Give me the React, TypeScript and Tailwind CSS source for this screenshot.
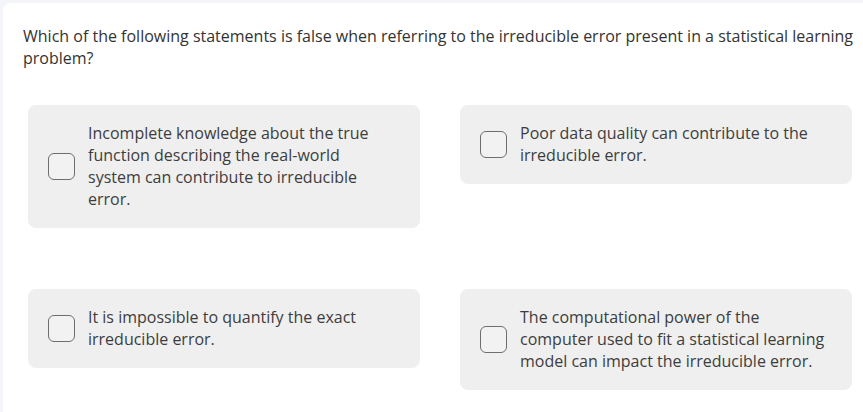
const options = [
  'Incomplete knowledge about the true function describing the real-world system can contribute to irreducible error.',
  'Poor data quality can contribute to the irreducible error.',
  'It is impossible to quantify the exact irreducible error.',
  'The computational power of the computer used to fit a statistical learning model can impact the irreducible error.',
];

function Option({ text }: { text: string }) {
  return (
    <label className="flex items-center gap-[13px] rounded-lg bg-[#efefef] pl-5 pr-6 pt-[17px] pb-[18px] cursor-pointer">
      <span className="shrink-0 w-[27px] h-[27px] rounded-[6px] border-[1.5px] border-[#6e6e6e] bg-[#f2f2f2]" />
      <span className="text-[16px] leading-[22px] text-[#3d3d3d]">{text}</span>
    </label>
  );
}

export default function App() {
  return (
    <div
      className="h-[412px] overflow-hidden bg-[#f4f5f8] pl-[3px] pt-[3px]"
      style={{ fontFamily: '"Open Sans", "Noto Sans", sans-serif' }}
    >
      <div className="h-full bg-white rounded-tl-lg pl-5 pt-[22px]">
        <p className="text-[16px] leading-[22px] text-[#333] w-[840px]">
          Which of the following statements is false when referring to the irreducible error present in a statistical learning
          problem?
        </p>
        <div className="ml-[5px] mt-[36px] grid grid-cols-[392px_392px] gap-x-10 gap-y-[61px] items-start">
          {options.map((o) => (
            <Option key={o} text={o} />
          ))}
        </div>
      </div>
    </div>
  );
}
